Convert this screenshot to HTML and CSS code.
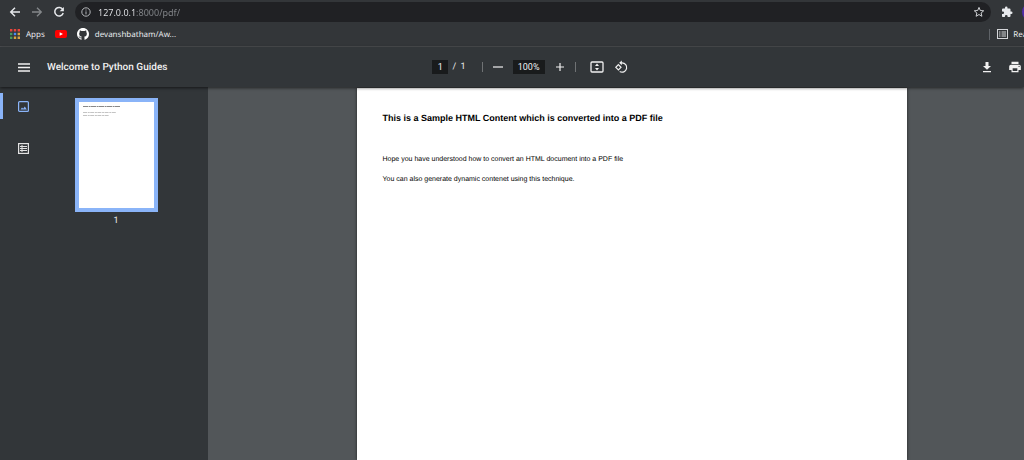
FILE: index.html
```html
<!DOCTYPE html>
<html lang="en">
<head>
  <meta charset="UTF-8" />
  <meta name="viewport" content="width=device-width, initial-scale=1" />
  <title>Welcome to Python Guides</title>
  <link rel="stylesheet" href="styles.css">
</head>
<body>
  <header class="browser">
    <nav class="nav-bar">
      <button class="icon-btn" aria-label="Back">
        <svg width="12" height="12" viewBox="0 0 12 12" fill="none" stroke="#e8eaed" stroke-width="1.4"><path d="M11 6H2M6 1.7 1.7 6 6 10.3"/></svg>
      </button>
      <button class="icon-btn" aria-label="Forward" disabled>
        <svg width="12" height="12" viewBox="0 0 12 12" fill="none" stroke="#85888b" stroke-width="1.3"><path d="M1 6h9M6 1.7 10.3 6 6 10.3"/></svg>
      </button>
      <button class="icon-btn" aria-label="Reload">
        <svg width="12" height="12" viewBox="0 0 12 12" fill="none" stroke="#e8eaed" stroke-width="1.5"><path d="M9.8 3.5A4.3 4.3 0 1 0 10.2 7"/><path d="M10.9 1v4.2H6.7z" fill="#e8eaed" stroke="none"/></svg>
      </button>
      <div class="address-bar">
        <svg width="10" height="10" viewBox="0 0 10 10" fill="none" stroke="#b4b7ba" stroke-width="1"><circle cx="5" cy="5" r="4.2"/><path d="M5 4.4v3M5 2.5v1"/></svg>
        <input class="address" type="text" value="127.0.0.1:8000/pdf/" aria-label="Address">
        <button class="icon-btn" aria-label="Bookmark this page">
          <svg width="12" height="12" viewBox="0 0 12 12" fill="none" stroke="#cfd1d4" stroke-width="1"><path d="m6 1.4 1.3 3.1 3.4.3-2.6 2.2.8 3.3L6 8.5l-2.9 1.8.8-3.3-2.6-2.2 3.4-.3z"/></svg>
        </button>
      </div>
      <div class="extensions">
        <button class="icon-btn" aria-label="Extensions">
          <svg width="12" height="12" viewBox="0 0 24 24" fill="#e8eaed"><path d="M20.5 11H19V7a2 2 0 0 0-2-2h-4V3.500a2.500 2.500 0 0 0-5 0V5H4a2 2 0 0 0-2 2v3.800h1.500a2.700 2.700 0 0 1 0 5.400H2V20c0 1.100.9 2 2 2h3.800v-1.500a2.700 2.700 0 0 1 5.400 0V22H17a2 2 0 0 0 2-2v-4h1.500a2.500 2.500 0 0 0 0-5z"/></svg>
        </button>
        <button class="avatar" aria-label="Profile"></button>
      </div>
    </nav>

    <nav class="bookmarks">
      <a class="bookmark" href="#">
        <svg width="10" height="10" viewBox="0 0 10 10">
          <path fill="#e8453c" d="M0 0h2.400v2.400H0zM3.800 0h2.400v2.400H3.800zM7.600 0H10v2.400H7.600z"/>
          <path fill="#4a9a5f" d="M0 3.800h2.400v2.400H0z"/>
          <path fill="#4c8bf5" d="M3.800 3.800h2.400v2.400H3.800z"/>
          <path fill="#d9a441" d="M7.600 3.800H10v2.400H7.600zM7.600 7.600H10V10H7.600zM3.800 7.600h2.400V10H3.800z"/>
          <path fill="#4a9a5f" d="M0 7.600h2.400V10H0z"/>
        </svg>
        Apps
      </a>
      <a class="bookmark" href="#" aria-label="YouTube">
        <svg width="12" height="8" viewBox="0 0 12 8"><rect width="12" height="8" rx="2" fill="#f00"/><path d="M4.700 2.200v3.600L8 4z" fill="#fff"/></svg>
      </a>
      <a class="bookmark" href="#">
        <svg width="12" height="12" viewBox="0 0 16 16" fill="#fff"><path d="M8 0C3.580 0 0 3.580 0 8c0 3.540 2.290 6.530 5.470 7.590.4.070.55-.17.55-.38 0-.19-.01-.82-.01-1.490-2.010.37-2.530-.49-2.690-.94-.09-.23-.48-.94-.82-1.130-.28-.15-.68-.52-.01-.53.63-.01 1.080.58 1.230.82.72 1.210 1.870.87 2.330.66.07-.52.28-.87.51-1.070-1.780-.2-3.640-.89-3.640-3.950 0-.87.31-1.590.82-2.150-.08-.2-.36-1.020.08-2.120 0 0 .67-.21 2.200.82.64-.18 1.320-.27 2-.27s1.360.09 2 .27c1.530-1.040 2.200-.82 2.200-.82.44 1.100.16 1.920.08 2.120.51.56.82 1.270.82 2.150 0 3.070-1.870 3.750-3.650 3.950.29.25.54.73.54 1.480 0 1.070-.01 1.930-.01 2.200 0 .21.15.46.55.38A8.010 8.010 0 0 0 16 8c0-4.420-3.580-8-8-8z"/></svg>
        devanshbatham/Aw...
      </a>
      <a class="bookmark reading-list" href="#">
        <svg width="11" height="10" viewBox="0 0 11 10" fill="none" stroke="#d5d7da" stroke-width="1"><rect x=".5" y=".5" width="10" height="9"/><path d="M2 3h1.500M2 5h1.500M2 7h1.500M4.500 3H9M4.500 5H9M4.500 7H9"/></svg>
        Reading list
      </a>
    </nav>
  </header>

  <div class="toolbar">
    <div class="toolbar-start">
      <button class="icon-btn" aria-label="Menu">
        <svg width="12" height="9" viewBox="0 0 12 9" stroke="#f1f1f1" stroke-width="1.400"><path d="M0 1h12M0 4.500h12M0 8h12"/></svg>
      </button>
      <h1 class="title">Welcome to Python Guides</h1>
    </div>
    <div class="toolbar-center">
      <input class="field page-field" type="text" value="1" aria-label="Page number">
      <span class="page-total">/&nbsp; 1</span>
      <span class="divider"></span>
      <button class="icon-btn" aria-label="Zoom out">
        <svg width="10" height="10" viewBox="0 0 10 10" stroke="#f1f1f1" stroke-width="1.200"><path d="M0 5h10"/></svg>
      </button>
      <input class="field zoom-field" type="text" value="100%" aria-label="Zoom level">
      <button class="icon-btn zoom-in" aria-label="Zoom in">
        <svg width="10" height="10" viewBox="0 0 10 10" stroke="#f1f1f1" stroke-width="1.200"><path d="M1 5h8M5 1v8"/></svg>
      </button>
      <span class="divider"></span>
      <button class="icon-btn fit" aria-label="Fit to page">
        <svg width="14" height="12" viewBox="0 0 14 12" fill="none" stroke="#f1f1f1" stroke-width="1.300"><rect x="1" y="1" width="12" height="10" rx="1"/><path d="M7 2.600 9 5H5zM7 9.400 9 7H5z" fill="#f1f1f1" stroke="none"/></svg>
      </button>
      <button class="icon-btn" aria-label="Rotate counterclockwise">
        <svg width="14" height="14" viewBox="0 0 14 14" fill="none" stroke="#f1f1f1" stroke-width="1.200"><path d="M7 2.800h1a4.700 4.700 0 1 1-2.300 8.800"/><path d="M4.400 4.700 7 7.300 4.400 9.900 1.800 7.300z"/><path d="M7.800.4v4.800L5.200 2.800z" fill="#f1f1f1" stroke="none"/></svg>
      </button>
    </div>
    <div class="toolbar-end">
      <button class="icon-btn" aria-label="Download">
        <svg width="10" height="12" viewBox="0 0 10 12" fill="#f1f1f1"><path d="M3.500 1h3v4H9L5 8.800 1 5h2.500zM1 10h8v1.200H1z"/></svg>
      </button>
      <button class="icon-btn" aria-label="Print">
        <svg width="14" height="14" viewBox="0 0 24 24" fill="#f1f1f1"><path d="M19 8H5a3 3 0 0 0-3 3v6h4v4h12v-4h4v-6a3 3 0 0 0-3-3zm-3 11H8v-5h8v5zm3-7a1 1 0 1 1 0-2 1 1 0 0 1 0 2zM18 3H6v4h12V3z"/></svg>
      </button>
    </div>
  </div>

  <main class="viewer">
    <aside class="sidebar">
      <div class="tabs">
        <button class="tab selected" aria-label="Thumbnails">
          <svg width="11" height="11" viewBox="0 0 11 11" fill="none" stroke="#8ab4f8" stroke-width="1.200"><rect x=".6" y=".6" width="9.800" height="9.800" rx="1"/><path d="M2.500 8.500 4 6.500l1.200 1.200L6.800 5.500l2 3z" fill="#8ab4f8" stroke="none"/></svg>
        </button>
        <button class="tab" aria-label="Document outline">
          <svg width="11" height="11" viewBox="0 0 11 11" fill="none" stroke="#e2e2e2" stroke-width="1.200"><rect x=".6" y=".6" width="9.800" height="9.800"/><path stroke-width="1" d="M2 3.500h7M2 5.500h7M2 7.500h7M4 2v7"/></svg>
        </button>
      </div>
      <div class="thumbnails">
        <button class="thumbnail" aria-label="Page 1">
          <svg width="75" height="106" viewBox="0 0 75 106"><path d="M4 4.500h37" stroke="#888" stroke-dasharray="5 .6 2 .4"/><path d="M4 10.500h33M4 13.500h26" stroke="#c4c4c4" stroke-dasharray="4 .7 2 .5"/></svg>
        </button>
        <span class="thumbnail-number">1</span>
      </div>
    </aside>
    <section class="document">
      <article class="page">
        <h2>This is a Sample HTML Content which is converted into a PDF file</h2>
        <p>Hope you have understood how to convert an HTML document into a PDF file</p>
        <p>You can also generate dynamic contenet using this technique.</p>
      </article>
    </section>
  </main>
</body>
</html>
```
FILE: styles.css
```css
* {
  box-sizing: border-box;
}

body {
  margin: 0;
  height: 100vh;
  display: flex;
  flex-direction: column;
  overflow: hidden;
  background: #525659;
  color: #f1f1f1;
  font-family: Roboto, "Liberation Sans", sans-serif;
  font-size: 9px;
  text-rendering: geometricPrecision;
}

svg {
  display: block;
  flex-shrink: 0;
}

button,
input {
  font: inherit;
  color: inherit;
  border: none;
  padding: 0;
  margin: 0;
  background: none;
}

.icon-btn {
  flex-shrink: 0;
  cursor: pointer;
}

/* Browser bars */
.browser {
  background: #333639;
  border-bottom: 1px solid #4b4d50;
}

.nav-bar {
  display: flex;
  align-items: center;
  gap: 10px;
  height: 24px;
  padding-left: 9px;
}

.address-bar {
  flex: 1;
  display: flex;
  align-items: center;
  gap: 7px;
  height: 20px;
  padding: 0 6px;
  border-radius: 10px;
  background: #202124;
}

.address {
  flex: 1;
  min-width: 0;
  font-family: "Noto Sans", sans-serif;
  font-size: 9px;
  color: transparent;
  background: linear-gradient(to right, #e8eaed 38px, #85888c 38px);
  background-clip: text;
  -webkit-background-clip: text;
  outline: none;
}

.extensions {
  display: flex;
  align-items: center;
  gap: 9px;
  margin-right: -16px;
}

.avatar {
  width: 18px;
  height: 18px;
  border-radius: 50%;
  background: #512da8;
}

.bookmarks {
  display: flex;
  align-items: center;
  gap: 10px;
  height: 22px;
  padding: 0 0 2px 10px;
  font-family: "Noto Sans", sans-serif;
  font-size: 8px;
}

.bookmark {
  display: flex;
  align-items: center;
  gap: 6px;
  color: #e8eaed;
  text-decoration: none;
  white-space: nowrap;
}

.reading-list {
  gap: 5px;
  margin-left: auto;
  margin-right: -33px;
  padding-left: 7px;
  border-left: 1px solid #5f6368;
}

/* PDF toolbar */
.toolbar {
  position: relative;
  display: grid;
  grid-template-columns: 1fr auto 1fr;
  align-items: center;
  height: 40px;
  flex-shrink: 0;
  background: #323639;
  box-shadow: 0 1px 3px rgba(0, 0, 0, 0.6);
}

.toolbar-start {
  display: flex;
  align-items: center;
  gap: 17px;
  padding-left: 18px;
}

.title {
  margin: 0;
  font-size: 10px;
  font-weight: 500;
}

.toolbar-center {
  display: flex;
  align-items: center;
  gap: 10px;
  padding-left: 36px;
}

.field {
  height: 14px;
  text-align: center;
  background: #191b1c;
}

.page-field {
  width: 16px;
  margin-right: -6px;
}

.page-total {
  margin-right: 6px;
}

.divider {
  width: 1px;
  height: 10px;
  background: #6f7274;
}

.zoom-field {
  width: 32px;
}

.fit {
  margin-left: 4px;
}

.toolbar-end {
  display: flex;
  justify-content: flex-end;
  align-items: center;
  gap: 16px;
  padding-right: 2px;
}

/* Viewer */
.viewer {
  flex: 1;
  display: flex;
  min-height: 0;
}

.sidebar {
  display: flex;
  width: 208px;
  flex-shrink: 0;
  background: #323639;
}

.tabs {
  display: flex;
  flex-direction: column;
  gap: 16px;
  padding-top: 6px;
}

.tab {
  height: 26px;
  padding: 0 15px;
  border-left: 3px solid transparent;
  cursor: pointer;
}

.tab.selected {
  border-left-color: #8ab4f8;
  border-radius: 0 2px 2px 0;
}

.thumbnails {
  flex: 1;
  display: flex;
  flex-direction: column;
  align-items: center;
  gap: 4px;
  padding: 11px 20px 0 0;
}

.thumbnail {
  border: 4px solid #8ab4f8;
  background: #fff;
  cursor: pointer;
}

.document {
  flex: 1;
  display: flex;
  justify-content: center;
  padding: 1px 0 0 31px;
}

.page {
  width: 550px;
  padding: 24px 26px;
  background: #fff;
  color: #000;
  font-family: "Liberation Sans", Arial, sans-serif;
  font-size: 7px;
  line-height: 12px;
  box-shadow: 0 0 3px rgba(0, 0, 0, 0.6);
}

.page h2 {
  margin: 0 0 30px;
  font-size: 9px;
}

.page p {
  margin: 0 0 8px;
}
```
